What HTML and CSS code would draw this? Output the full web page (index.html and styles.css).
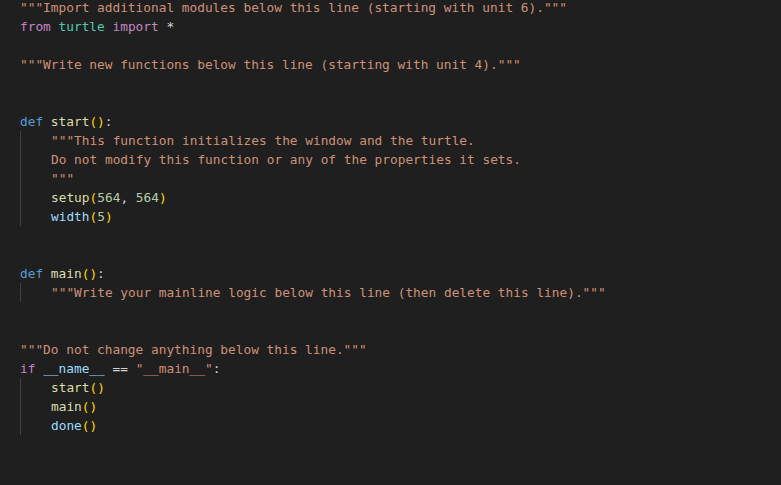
FILE: index.html
```html
<!DOCTYPE html>
<html>
<head>
<meta charset="utf-8">
<link rel="stylesheet" href="styles.css">
</head>
<body>
<div class="editor">
<div class="line"><span class="s">"""Import additional modules below this line (starting with unit 6)."""</span></div>
<div class="line"><span class="k">from</span> <span class="m">turtle</span> <span class="k">import</span> <span class="p">*</span></div>
<div class="line"></div>
<div class="line"><span class="s">"""Write new functions below this line (starting with unit 4)."""</span></div>
<div class="line"></div>
<div class="line"></div>
<div class="line"><span class="d">def</span> <span class="f">start</span><span class="b">()</span><span class="p">:</span></div>
<div class="block">
<div class="line"><span class="s">"""This function initializes the window and the turtle.</span></div>
<div class="line"><span class="s">Do not modify this function or any of the properties it sets.</span></div>
<div class="line"><span class="s">"""</span></div>
<div class="line"><span class="f">setup</span><span class="b">(</span><span class="n">564</span><span class="p">, </span><span class="n">564</span><span class="b">)</span></div>
<div class="line"><span class="v">width</span><span class="b">(</span><span class="n">5</span><span class="b">)</span></div>
</div>
<div class="line"></div>
<div class="line"></div>
<div class="line"><span class="d">def</span> <span class="f">main</span><span class="b">()</span><span class="p">:</span></div>
<div class="block">
<div class="line"><span class="s">"""Write your mainline logic below this line (then delete this line)."""</span></div>
</div>
<div class="line"></div>
<div class="line"></div>
<div class="line"><span class="s">"""Do not change anything below this line."""</span></div>
<div class="line"><span class="k">if</span> <span class="v">__name__</span> <span class="p">==</span> <span class="s">"__main__"</span><span class="p">:</span></div>
<div class="block">
<div class="line"><span class="f">start</span><span class="b">()</span></div>
<div class="line"><span class="f">main</span><span class="b">()</span></div>
<div class="line"><span class="v">done</span><span class="b">()</span></div>
</div>
</div>
</body>
</html>
```
FILE: styles.css
```css
html, body {
  margin: 0;
  padding: 0;
  background: #1f1f1f;
  height: 100%;
  overflow: hidden;
}
.editor {
  padding: 0 0 0 20px;
  margin-top: -2px;
  font-family: "DejaVu Sans Mono", "Liberation Mono", monospace;
  font-size: 12.8px;
  color: #d4d4d4;
}
.line {
  height: 19px;
  line-height: 19px;
  white-space: pre;
}
.block {
  border-left: 1px solid #404040;
  padding-left: 30px;
}
.s { color: #ce9178; }
.k { color: #c586c0; }
.m { color: #4ec9b0; }
.d { color: #569cd6; }
.f { color: #dcdcaa; }
.v { color: #9cdcfe; }
.b { color: #ffd700; }
.n { color: #b5cea8; }
.p { color: #d4d4d4; }
```
